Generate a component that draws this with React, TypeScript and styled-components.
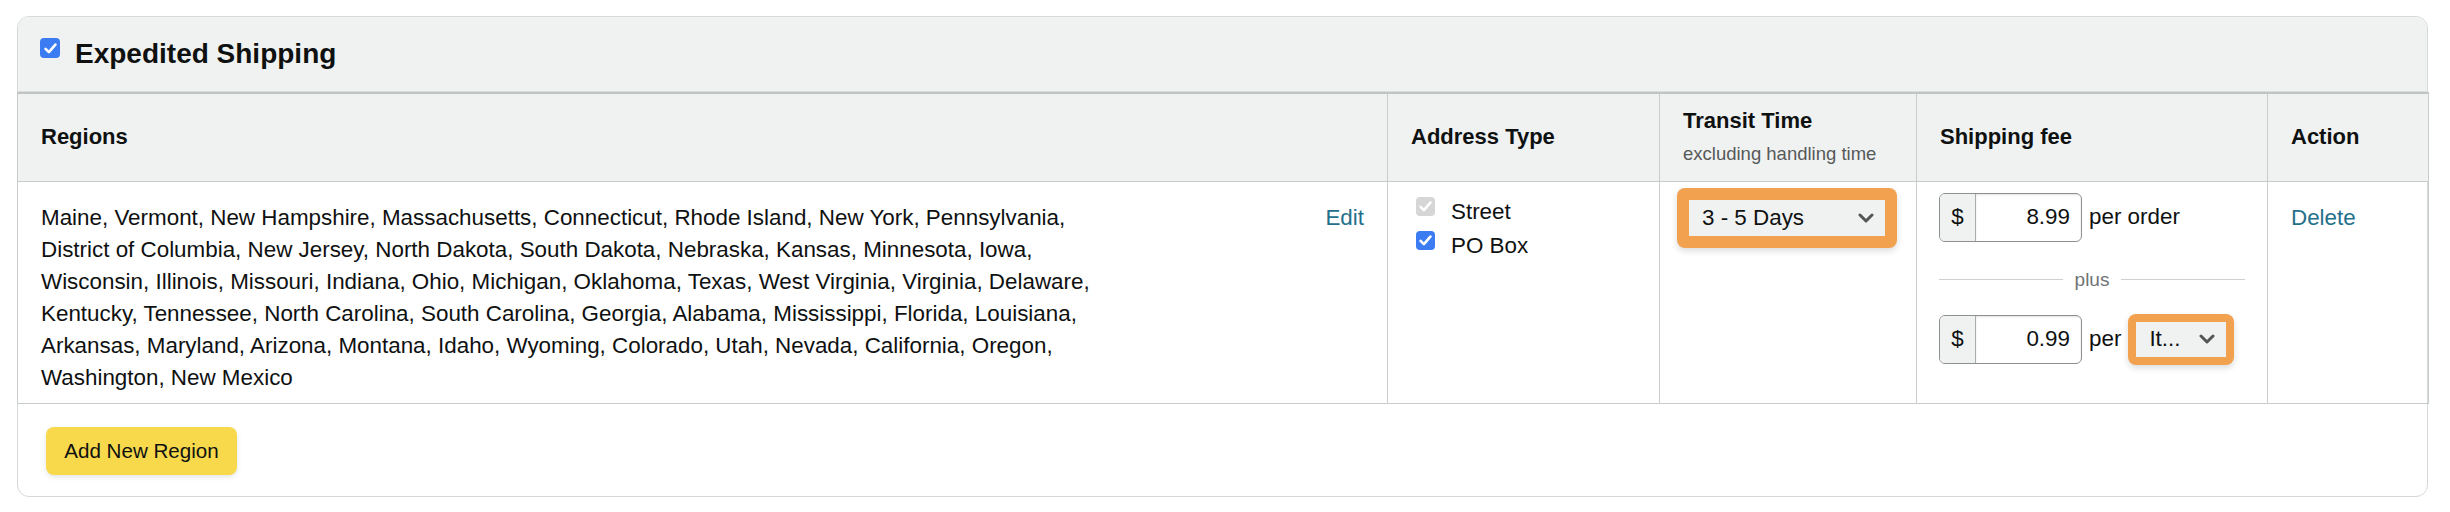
import React from "react";
import styled, { createGlobalStyle } from "styled-components";

const GlobalStyle = createGlobalStyle`
  *, *::before, *::after { box-sizing: border-box; }
  html, body { margin: 0; padding: 0; background: #fff; }
  body {
    font-family: "Liberation Sans", Arial, sans-serif;
    color: #0f1111;
    font-size: 22.4px;
    line-height: 32px;
  }
`;

const Page = styled.div`
  padding: 16px 22px 15px 17px;
`;

const Card = styled.section`
  border: 1px solid #d5d9d9;
  border-radius: 12px;
  background: #fff;
`;

const CardHeader = styled.header`
  display: flex;
  align-items: flex-start;
  gap: 15px;
  height: 75px;
  padding: 21px 22px 0;
  background: #f0f2f2;
  border-bottom: 1px solid #dadddd;
  border-radius: 11px 11px 0 0;
`;

const Title = styled.h2`
  margin: 0;
  font-size: 28px;
  line-height: 32px;
  font-weight: 700;
`;

const Box = styled.span<{ $disabled?: boolean; $size?: number }>`
  flex: none;
  display: inline-flex;
  align-items: center;
  justify-content: center;
  width: ${(p) => p.$size ?? 19}px;
  height: ${(p) => p.$size ?? 19}px;
  border-radius: 4px;
  background: ${(p) => (p.$disabled ? "#d6d6d6" : "#3b7cf3")};
  svg { display: block; }
`;

const Checkbox = ({ disabled, size }: { disabled?: boolean; size?: number }) => (
  <Box $disabled={disabled} $size={size}>
    <svg width="13" height="11" viewBox="0 0 13 11" fill="none">
      <path d="M1.6 5.8 L4.9 9.1 L11.4 1.6" stroke="#fff" strokeWidth="2.6" strokeLinecap="round" strokeLinejoin="round" />
    </svg>
  </Box>
);

const Table = styled.table`
  width: calc(100% + 2px);
  margin: 0 -1px;
  border-collapse: collapse;
  table-layout: fixed;
`;

const Th = styled.th`
  height: 88px;
  padding: 0 23px;
  text-align: left;
  vertical-align: middle;
  font-size: 22px;
  line-height: 32px;
  font-weight: 700;
  background: #f0f2f2;
  border: 1px solid #c9cccc;
  border-top: 2px solid #c0c4c4;
`;

const SubHead = styled.div`
  margin-top: 2px;
  font-size: 18.5px;
  line-height: 30px;
  font-weight: 400;
  color: #565959;
`;

const Td = styled.td`
  vertical-align: top;
  border: 1px solid #c9cccc;
`;

const RegionCell = styled(Td)`
  padding: 20px 23px 9px;
`;

const RegionWrap = styled.div`
  display: flex;
  justify-content: space-between;
  align-items: flex-start;
`;

const RegionText = styled.div`
  line-height: 32px;
`;

const Link = styled.a`
  color: #24708b;
  text-decoration: none;
  cursor: pointer;
`;

const AddressCell = styled(Td)`
  padding: 14px 20px 0 28px;
`;

const Option = styled.label`
  display: flex;
  align-items: flex-start;
  gap: 16px;
  line-height: 32px;
  margin-bottom: 2px;
  > span:first-child { margin-top: 1px; }
`;

const TransitCell = styled(Td)`
  padding: 6px 17px 0;
`;

const FocusRing = styled.div<{ $ring: number; $width: number }>`
  display: inline-flex;
  width: ${(p) => p.$width}px;
  padding: ${(p) => p.$ring}px;
  border-radius: 8px;
  background: #f2a14f;
  box-shadow: 0 3px 6px rgba(15, 17, 17, 0.15);
`;

const SelectBox = styled.div<{ $height: number; $padLeft: number }>`
  flex: 1;
  display: flex;
  align-items: center;
  justify-content: space-between;
  height: ${(p) => p.$height}px;
  padding: 0 11px 0 ${(p) => p.$padLeft}px;
  background: #f0f2f2;
  color: #0f1111;
  white-space: nowrap;
`;

const Chevron = () => (
  <svg width="16" height="10" viewBox="0 0 16 10" fill="none">
    <path d="M2 2 L8 8 L14 2" stroke="#555" strokeWidth="3" strokeLinecap="round" strokeLinejoin="round" />
  </svg>
);

const FeeCell = styled(Td)`
  padding: 11px 21px 0 22px;
`;

const FeeRow = styled.div`
  display: flex;
  align-items: center;
  gap: 7px;
  white-space: nowrap;
`;

const InputGroup = styled.div`
  display: flex;
  width: 143px;
  height: 49px;
  border: 1px solid #8d9090;
  border-radius: 6px;
  overflow: hidden;
  background: #fff;
`;

const Addon = styled.span`
  flex: none;
  width: 36px;
  display: flex;
  align-items: center;
  justify-content: center;
  background: #f0f2f2;
  border-right: 1px solid #a9acac;
`;

const Amount = styled.span`
  flex: 1;
  display: flex;
  align-items: center;
  justify-content: flex-end;
  padding-right: 11px;
  box-shadow: inset 0 1px 2px rgba(15, 17, 17, 0.12);
`;

const Divider = styled.div`
  display: flex;
  align-items: center;
  gap: 12px;
  width: 306px;
  height: 30px;
  margin: 23px 0 19px;
  font-size: 19px;
  color: #6f7373;
  &::before, &::after {
    content: "";
    flex: 1;
    height: 1px;
    background: #cdd0d0;
  }
`;

const ActionCell = styled(Td)`
  padding: 20px 23px 0;
`;

const Footer = styled.div`
  padding: 23px 0 21px 28px;
`;

const PrimaryButton = styled.button`
  width: 191px;
  height: 48px;
  border: none;
  border-radius: 8px;
  background: #f8d94b;
  box-shadow: 0 2px 5px rgba(213, 217, 217, 0.7);
  font-family: inherit;
  font-size: 20.6px;
  color: #0f1111;
  cursor: pointer;
`;

const regionLines = [
  "Maine, Vermont, New Hampshire, Massachusetts, Connecticut, Rhode Island, New York, Pennsylvania,",
  "District of Columbia, New Jersey, North Dakota, South Dakota, Nebraska, Kansas, Minnesota, Iowa,",
  "Wisconsin, Illinois, Missouri, Indiana, Ohio, Michigan, Oklahoma, Texas, West Virginia, Virginia, Delaware,",
  "Kentucky, Tennessee, North Carolina, South Carolina, Georgia, Alabama, Mississippi, Florida, Louisiana,",
  "Arkansas, Maryland, Arizona, Montana, Idaho, Wyoming, Colorado, Utah, Nevada, California, Oregon,",
  "Washington, New Mexico",
];

export default function App() {
  return (
    <>
      <GlobalStyle />
      <Page>
        <Card>
          <CardHeader>
            <Checkbox size={20} />
            <Title>Expedited Shipping</Title>
          </CardHeader>
          <Table>
            <colgroup>
              <col style={{ width: 1370 }} />
              <col style={{ width: 272 }} />
              <col style={{ width: 257 }} />
              <col style={{ width: 351 }} />
              <col style={{ width: 161 }} />
            </colgroup>
            <thead>
              <tr>
                <Th>Regions</Th>
                <Th>Address Type</Th>
                <Th>
                  Transit Time
                  <SubHead>excluding handling time</SubHead>
                </Th>
                <Th>Shipping fee</Th>
                <Th>Action</Th>
              </tr>
            </thead>
            <tbody>
              <tr>
                <RegionCell>
                  <RegionWrap>
                    <RegionText>
                      {regionLines.map((l, i) => (
                        <div key={i}>{l}</div>
                      ))}
                    </RegionText>
                    <Link>Edit</Link>
                  </RegionWrap>
                </RegionCell>
                <AddressCell>
                  <Option>
                    <Checkbox disabled />
                    <span>Street</span>
                  </Option>
                  <Option>
                    <Checkbox />
                    <span>PO Box</span>
                  </Option>
                </AddressCell>
                <TransitCell>
                  <FocusRing $ring={12} $width={220}>
                    <SelectBox $height={36} $padLeft={13}>
                      <span>3 - 5 Days</span>
                      <Chevron />
                    </SelectBox>
                  </FocusRing>
                </TransitCell>
                <FeeCell>
                  <FeeRow>
                    <InputGroup>
                      <Addon>$</Addon>
                      <Amount>8.99</Amount>
                    </InputGroup>
                    <span>per order</span>
                  </FeeRow>
                  <Divider>plus</Divider>
                  <FeeRow>
                    <InputGroup>
                      <Addon>$</Addon>
                      <Amount>0.99</Amount>
                    </InputGroup>
                    <span>per</span>
                    <FocusRing $ring={8} $width={106}>
                      <SelectBox $height={35} $padLeft={13}>
                        <span>It...</span>
                        <Chevron />
                      </SelectBox>
                    </FocusRing>
                  </FeeRow>
                </FeeCell>
                <ActionCell>
                  <Link>Delete</Link>
                </ActionCell>
              </tr>
            </tbody>
          </Table>
          <Footer>
            <PrimaryButton>Add New Region</PrimaryButton>
          </Footer>
        </Card>
      </Page>
    </>
  );
}
